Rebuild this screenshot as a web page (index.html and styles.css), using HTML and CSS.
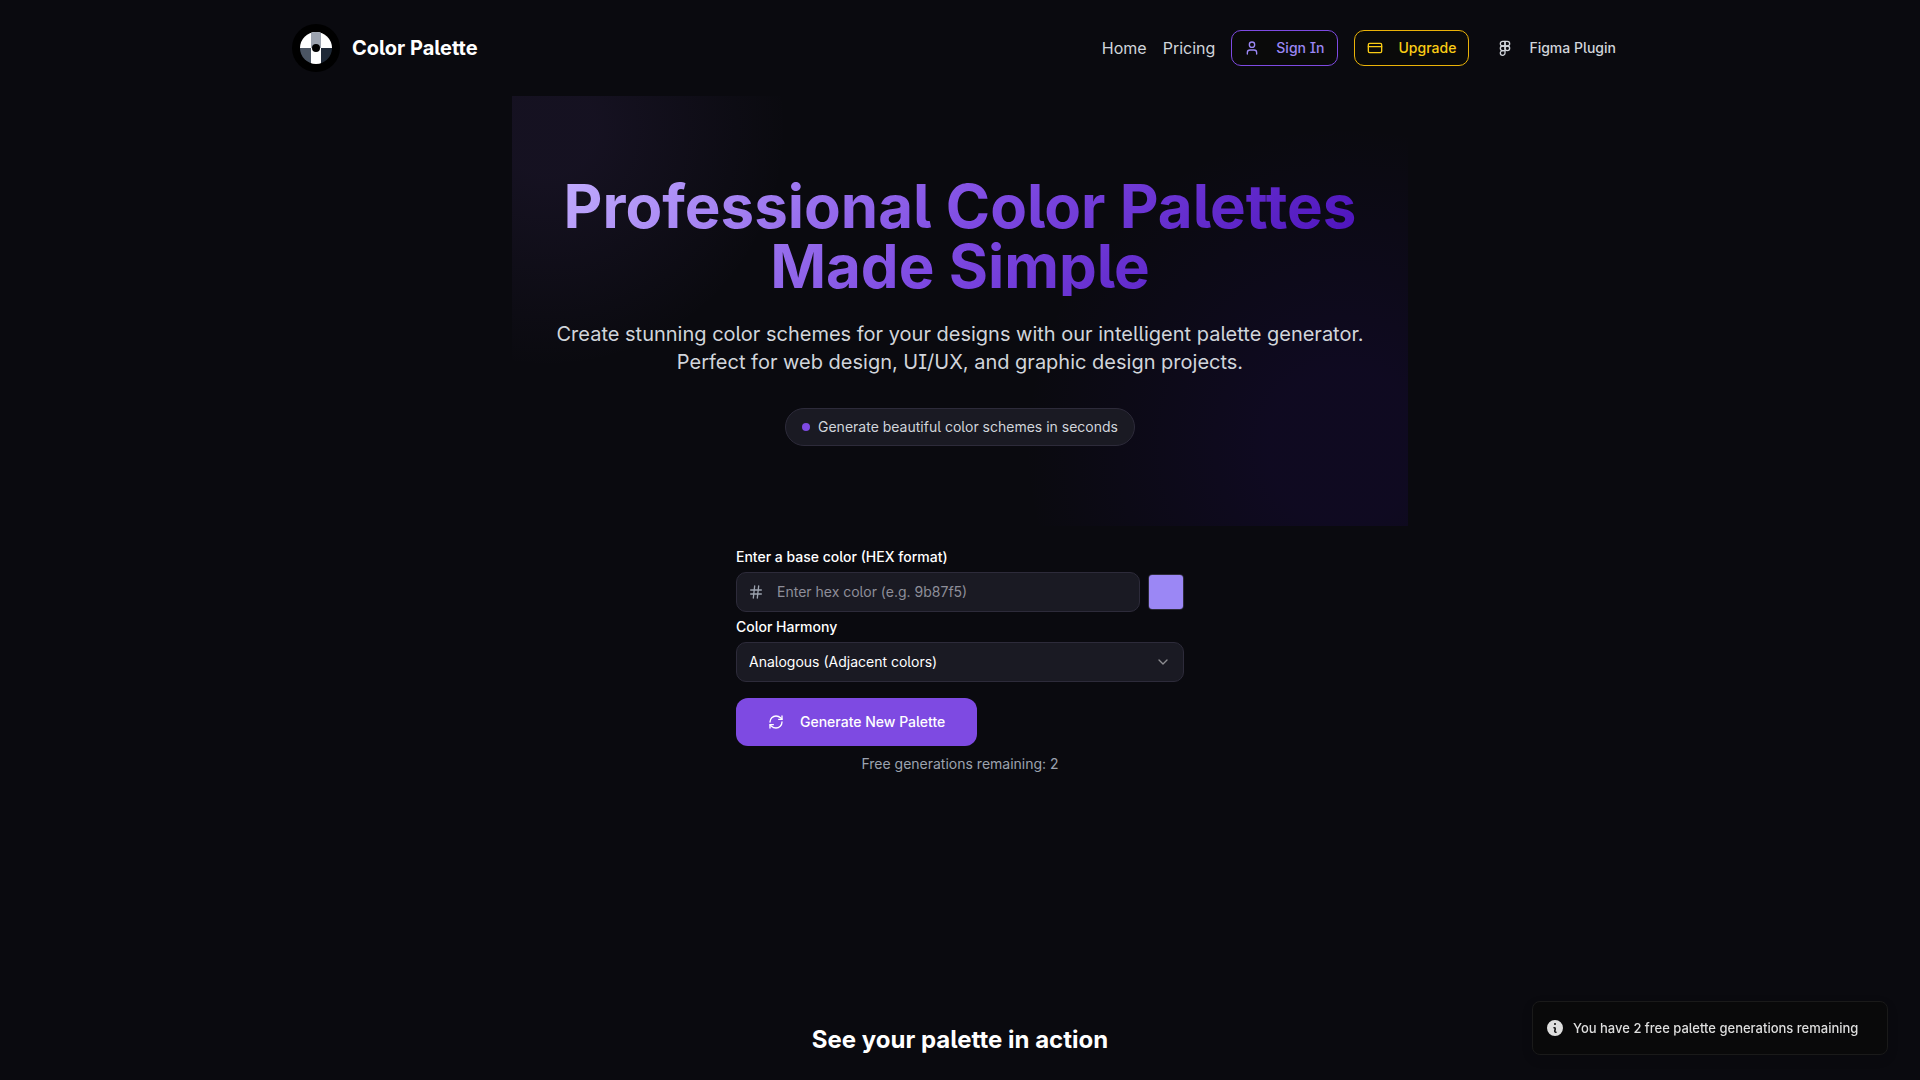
FILE: index.html
```html
<!DOCTYPE html>
<html lang="en">
<head>
<meta charset="utf-8">
<meta name="viewport" content="width=device-width, initial-scale=1">
<title>Color Palette</title>
<link rel="stylesheet" href="styles.css">
</head>
<body>
<header class="header">
  <a class="brand" href="#">
    <svg class="brand-logo" viewBox="0 0 48 48" aria-hidden="true">
      <defs><clipPath id="disc"><circle cx="24" cy="24" r="16"/></clipPath></defs>
      <circle cx="24" cy="24" r="24" fill="#000"/>
      <g clip-path="url(#disc)">
        <path fill="#fff" d="M8 8h32v16H8zM19 24h10v16H19z"/>
        <path fill="#9ca3af" d="M19 8h10v16H19z"/>
        <path fill="#4b5563" d="M8 24h11v16H8z"/>
        <path fill="#1f2937" d="M29 24h11v16H29z"/>
      </g>
      <circle cx="24" cy="24" r="4" fill="#000"/>
    </svg>
    <span>Color Palette</span>
  </a>
  <nav class="nav">
    <a class="nav-link" href="#">Home</a>
    <a class="nav-link" href="#">Pricing</a>
    <button class="button button-signin" type="button">
      <svg class="icon" viewBox="0 0 24 24"><path d="M19 21v-2a4 4 0 0 0-4-4H9a4 4 0 0 0-4 4v2"/><circle cx="12" cy="7" r="4"/></svg>
      Sign In
    </button>
    <button class="button button-upgrade" type="button">
      <svg class="icon" viewBox="0 0 24 24"><rect width="20" height="14" x="2" y="5" rx="2"/><path d="M2 10h20"/></svg>
      Upgrade
    </button>
    <button class="button button-ghost" type="button">
      <svg class="icon" viewBox="0 0 24 24"><path d="M5 5.5A3.5 3.5 0 0 1 8.500 2H12v7H8.500A3.500 3.500 0 0 1 5 5.500z"/><path d="M12 2h3.500a3.500 3.500 0 1 1 0 7H12V2z"/><path d="M12 12.500a3.500 3.500 0 1 1 7 0 3.500 3.500 0 1 1-7 0z"/><path d="M5 19.500A3.500 3.500 0 0 1 8.500 16H12v3.500a3.500 3.500 0 1 1-7 0z"/><path d="M5 12.500A3.500 3.500 0 0 1 8.500 9H12v7H8.500A3.500 3.500 0 0 1 5 12.500z"/></svg>
      Figma Plugin
    </button>
  </nav>
</header>
<main>
  <section class="hero">
    <h1 class="hero-title">Professional Color Palettes Made Simple</h1>
    <p class="hero-text">Create stunning color schemes for your designs with our intelligent palette generator. Perfect for web design, UI/UX, and graphic design projects.</p>
    <div class="badge"><span class="badge-dot"></span>Generate beautiful color schemes in seconds</div>
  </section>
  <form class="generator">
    <label class="label" for="hex">Enter a base color (HEX format)</label>
    <div class="color-row">
      <div class="field">
        <svg class="icon field-icon" viewBox="0 0 24 24"><path d="M4 9h16M4 15h16M10 3 8 21M16 3l-2 18"/></svg>
        <input class="field-input" id="hex" type="text" placeholder="Enter hex color (e.g. 9b87f5)">
      </div>
      <input class="swatch" type="color" value="#9b87f5" aria-label="Base color">
    </div>
    <label class="label" for="harmony">Color Harmony</label>
    <div class="select-wrap">
      <select class="select" id="harmony"><option>Analogous (Adjacent colors)</option></select>
      <svg class="icon select-icon" viewBox="0 0 24 24"><path d="m6 9 6 6 6-6"/></svg>
    </div>
    <button class="button button-primary" type="button">
      <svg class="icon" viewBox="0 0 24 24"><path d="M3 12a9 9 0 0 1 9-9 9.750 9.750 0 0 1 6.740 2.740L21 8"/><path d="M21 3v5h-5"/><path d="M21 12a9 9 0 0 1-9 9 9.750 9.750 0 0 1-6.740-2.740L3 16"/><path d="M8 16H3v5"/></svg>
      Generate New Palette
    </button>
    <p class="remaining">Free generations remaining: 2</p>
  </form>
  <section class="preview"><h2 class="preview-title">See your palette in action</h2></section>
</main>
<div class="toast" role="status">
  <svg class="toast-icon" viewBox="0 0 20 20" fill="currentColor"><path fill-rule="evenodd" clip-rule="evenodd" d="M18 10a8 8 0 1 1-16 0 8 8 0 0 1 16 0Zm-7-4a1 1 0 1 1-2 0 1 1 0 0 1 2 0ZM9 9a.75.75 0 0 0 0 1.500h.253a.25.25 0 0 1 .244.304l-.459 2.066A1.750 1.750 0 0 0 10.747 15H11a.75.75 0 0 0 0-1.500h-.253a.25.25 0 0 1-.244-.304l.459-2.066A1.750 1.750 0 0 0 9.253 9H9Z"/></svg>
  <span>You have 2 free palette generations remaining</span>
</div>
</body>
</html>
```
FILE: styles.css
```css
*, *::before, *::after { box-sizing: border-box; }

body {
  margin: 0;
  min-height: 100vh;
  background: #0a0a0f;
  color: #fff;
  font-family: Inter, sans-serif;
  font-size: 16px;
  line-height: 24px;
  font-feature-settings: "ss02";
  font-optical-sizing: none;
}

h1, h2, p { margin: 0; }
a { color: inherit; text-decoration: none; }
button, input, select {
  font: inherit;
  font-feature-settings: inherit;
  font-optical-sizing: inherit;
  color: inherit;
}

.icon {
  width: 16px;
  height: 16px;
  flex: none;
  fill: none;
  stroke: currentColor;
  stroke-width: 2;
  stroke-linecap: round;
  stroke-linejoin: round;
}

.header {
  display: flex;
  align-items: center;
  justify-content: space-between;
  max-width: 1400px;
  margin: 0 auto;
  padding: 24px 32px;
}
.brand {
  display: flex;
  align-items: center;
  gap: 12px;
  font-size: 20px;
  line-height: 28px;
  font-weight: 700;
}
.brand-logo { width: 48px; height: 48px; }
.nav { display: flex; align-items: center; gap: 16px; }
.nav-link { color: #d1d5db; }

.button {
  display: inline-flex;
  align-items: center;
  gap: 16px;
  height: 36px;
  padding: 0 12px;
  border: 1px solid transparent;
  border-radius: 10px;
  background: #0a0a0a;
  font-size: 14px;
  line-height: 20px;
  font-weight: 500;
  white-space: nowrap;
  cursor: pointer;
}
.button-signin { border-color: #7e4ae2; color: #9b87f5; }
.button-upgrade { border-color: #eab308; color: #facc15; }
.button-ghost { border: 0; background: none; color: #d1d5db; }
.button-primary {
  height: 48px;
  padding: 0 32px;
  border: 0;
  border-radius: 12px;
  background: #7e4ae2;
}

.hero {
  max-width: 896px;
  margin: 0 auto;
  padding: 80px 32px;
  text-align: center;
  background:
    radial-gradient(circle 240px at 36px 32px, rgba(155, 105, 245, 0.08) 20%, transparent),
    radial-gradient(circle 320px at calc(100% - 64px) calc(100% - 80px), rgba(60, 10, 190, 0.1) 24%, transparent);
}
.hero-title {
  font-size: 60px;
  line-height: 60px;
  font-weight: 700;
  background: linear-gradient(135deg, #c4b0ff, #7e4ae2, #4409b4);
  -webkit-background-clip: text;
  background-clip: text;
  color: transparent;
}
.hero-text {
  margin-top: 24px;
  font-size: 20px;
  line-height: 28px;
  color: #d1d5db;
}
.badge {
  display: inline-flex;
  align-items: center;
  gap: 8px;
  margin-top: 32px;
  padding: 8px 16px;
  border: 1px solid #2d2b3a;
  border-radius: 24px;
  background: #1a1a23;
  color: #d1d5db;
  font-size: 14px;
  line-height: 20px;
  vertical-align: top;
}
.badge-dot { width: 8px; height: 8px; border-radius: 50%; background: #7e4ae2; }

.generator {
  display: flex;
  flex-direction: column;
  gap: 8px;
  max-width: 448px;
  margin: 24px auto 0;
}
.label { font-size: 14px; line-height: 14px; font-weight: 500; }
.color-row { display: flex; align-items: center; gap: 8px; }
.field {
  display: flex;
  flex: 1;
  align-items: center;
  gap: 13px;
  height: 40px;
  padding: 0 11px;
  border: 1px solid #2d2b3a;
  border-radius: 10px;
  background: #1a1a23;
}
.field-icon { color: #9ca3af; }
.field-input {
  flex: 1;
  min-width: 0;
  padding: 0;
  border: 0;
  outline: 0;
  background: none;
  font-size: 14px;
  line-height: 20px;
}
.field-input::placeholder { color: #8e8e99; }
.swatch {
  width: 36px;
  height: 36px;
  padding: 0;
  border: 1px solid #2d2b3a;
  border-radius: 4px;
  background: #9b87f5;
  overflow: hidden;
}
.swatch::-webkit-color-swatch-wrapper { padding: 0; }
.swatch::-webkit-color-swatch { border: 0; }
.select-wrap { display: grid; align-items: center; }
.select {
  grid-area: 1 / 1;
  width: 100%;
  height: 40px;
  padding: 0 12px;
  appearance: none;
  border: 1px solid #2d2b3a;
  border-radius: 10px;
  background: #1a1a23;
  font-size: 14px;
  line-height: 20px;
}
.select-icon {
  grid-area: 1 / 1;
  justify-self: end;
  margin-right: 13px;
  color: #8d8d91;
  pointer-events: none;
}
.generator .button-primary { align-self: flex-start; margin-top: 8px; }
.remaining { text-align: center; font-size: 14px; line-height: 20px; color: #9ca3af; }

.preview { margin-top: 250px; padding-bottom: 24px; text-align: center; }
.preview-title { font-size: 24px; line-height: 32px; font-weight: 700; }

.toast {
  position: fixed;
  right: 32px;
  bottom: 25px;
  display: flex;
  align-items: center;
  gap: 8px;
  width: 356px;
  padding: 16px 12px;
  border: 1px solid #1a1a1a;
  border-radius: 8px;
  background: #09090a;
  color: #dedede;
  box-shadow: 0 4px 12px rgba(0, 0, 0, 0.1);
  font-size: 13px;
  line-height: 20px;
  font-weight: 500;
}
.toast-icon { width: 20px; height: 20px; flex: none; }
```
